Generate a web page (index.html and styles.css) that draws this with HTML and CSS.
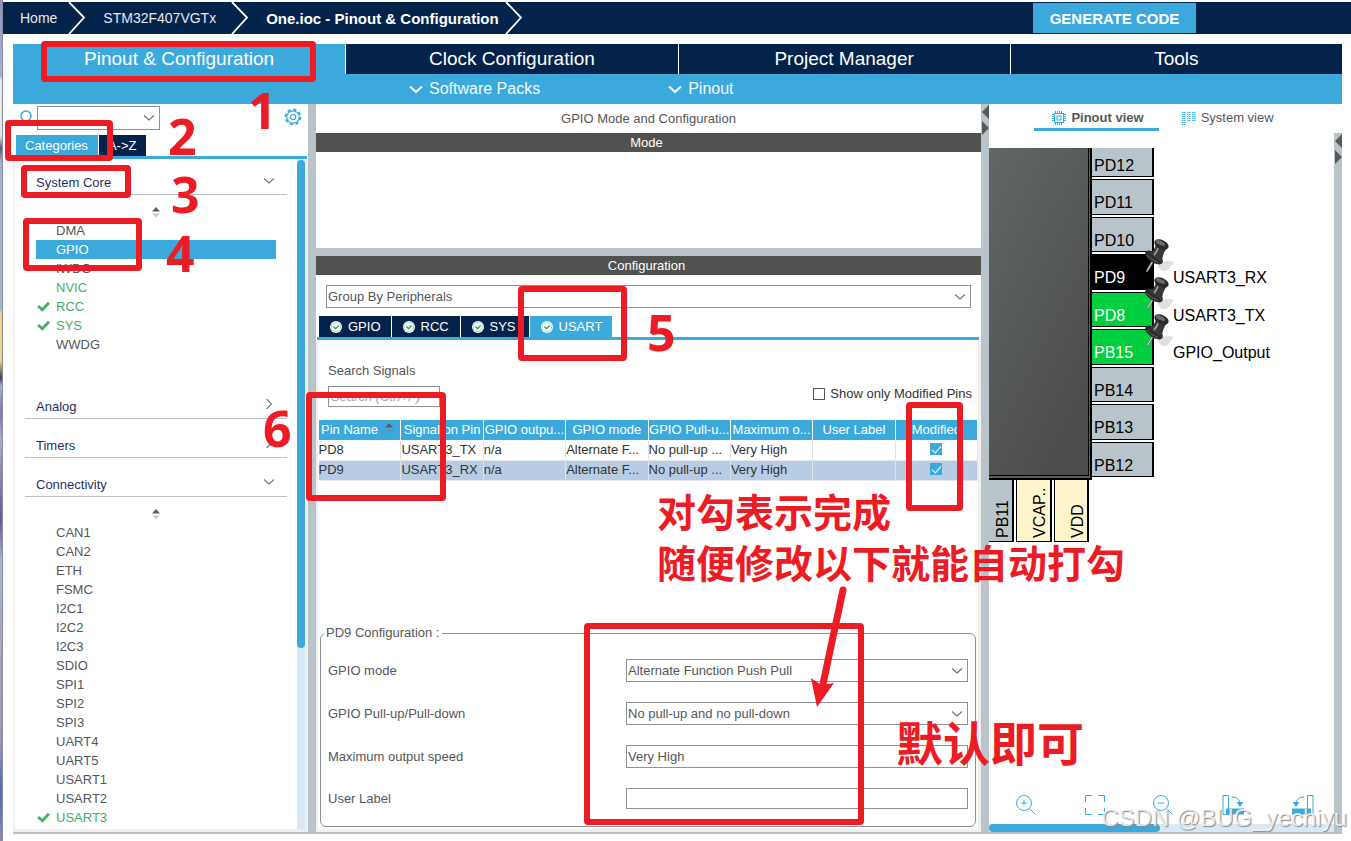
FILE: index.html
```html
<!DOCTYPE html>
<html lang="en">
<head>
    <meta charset="UTF-8">
    <meta name="viewport" content="width=device-width, initial-scale=1.0">
    <title>One.ioc - Pinout &amp; Configuration</title>
    <link rel="stylesheet" href="styles.css">
</head>
<body>
    <!-- Shared icons -->
    <svg class="sprite" aria-hidden="true">
        <symbol id="crumb-arrow" viewBox="0 0 18 32"><path d="M1 0 L16 15.500 L1 32" fill="none" stroke="#fff" stroke-width="1.800"/></symbol>
        <symbol id="chev-down" viewBox="0 0 12 8"><path d="M1 1.500 L6 6 L11 1.500" fill="none" stroke="currentColor" stroke-width="1.100"/></symbol>
        <symbol id="chev-right" viewBox="0 0 8 12"><path d="M1.500 1 L6.500 6 L1.500 11" fill="none" stroke="currentColor" stroke-width="1.100"/></symbol>
        <symbol id="chev-bold" viewBox="0 0 14 9"><path d="M1 1.500 L7 7 L13 1.500" fill="none" stroke="currentColor" stroke-width="2.200"/></symbol>
        <symbol id="sort" viewBox="0 0 8 11"><path d="M0 4.500 L4 0 L8 4.500 Z" fill="#5b5d5d"/><path d="M0 6.500 L4 10.500 L8 6.500 Z" fill="currentColor"/></symbol>
        <symbol id="tick" viewBox="0 0 12 10"><path d="M1 4.500 L5 8 L11 1.500" fill="none" stroke="#45ad6c" stroke-width="2.600"/></symbol>
        <symbol id="tick-round" viewBox="0 0 12 12"><circle cx="6" cy="6" r="6" fill="#fff"/><circle cx="6" cy="6" r="4.700" fill="none" stroke="#a5dab8" stroke-width="1"/><path d="M3.500 5.500 L5.500 7.700 L8.700 4.500" fill="none" stroke="#3aa45f" stroke-width="1.400"/></symbol>
        <symbol id="pushpin" viewBox="0 0 30 36">
            <path d="M12 27 Q20 20 29 23 L26 27 Q21 35 16 31 Z" fill="#000" opacity="0.120"/>
            <path d="M2 32 L8 22" stroke="#777" stroke-width="2.400" stroke-linecap="round"/>
            <path d="M2.500 31 L8 22" stroke="#ddd" stroke-width="1"/>
            <ellipse cx="9" cy="18.500" rx="10" ry="5" transform="rotate(33 9 18.500)" fill="#2b2b2b"/>
            <path d="M4 14 Q10 12 11 5 L22 9 Q17 15 17 24 Z" fill="#383838"/>
            <ellipse cx="16.500" cy="5.500" rx="7.500" ry="4.500" transform="rotate(25 16.500 5.500)" fill="#2b2b2b"/>
            <ellipse cx="15.500" cy="4" rx="5" ry="2" transform="rotate(25 15.500 4)" fill="#6a6a6a"/>
            <path d="M13 9 Q12 13 9 16" fill="none" stroke="#9a9a9a" stroke-width="1.800"/>
            <path d="M2 16 Q6 21 13 23.500" fill="none" stroke="#666" stroke-width="1"/>
        </symbol>
    </svg>

    <div class="desktop"></div>

    <div class="app">
        <header class="topbar">
            <nav class="crumbs">
                <a href="#" class="crumb">Home</a>
                <svg class="crumb-arrow"><use href="#crumb-arrow"/></svg>
                <a href="#" class="crumb crumb-chip">STM32F407VGTx</a>
                <svg class="crumb-arrow"><use href="#crumb-arrow"/></svg>
                <a href="#" class="crumb crumb-current">One.ioc - Pinout &amp; Configuration</a>
                <svg class="crumb-arrow"><use href="#crumb-arrow"/></svg>
            </nav>
            <button class="generate">GENERATE CODE</button>
        </header>

        <div class="workspace">
            <nav class="main-tabs">
                <button class="main-tab active">Pinout &amp; Configuration</button>
                <button class="main-tab">Clock Configuration</button>
                <button class="main-tab">Project Manager</button>
                <button class="main-tab">Tools</button>
            </nav>
            <div class="sub-bar">
                <button class="sub-item"><svg class="sub-icon"><use href="#chev-bold"/></svg>Software Packs</button>
                <button class="sub-item"><svg class="sub-icon"><use href="#chev-bold"/></svg>Pinout</button>
            </div>

            <main class="panes">
                <!-- Left: component list -->
                <aside class="side">
                    <div class="side-search">
                        <svg class="search-icon" viewBox="0 0 14 16"><circle cx="6" cy="6" r="5" fill="none" stroke="#3ba9dc" stroke-width="1.600"/><path d="M2.500 10 L0 14" stroke="#3ba9dc" stroke-width="1.600"/></svg>
                        <span class="combo">
                            <select aria-label="Search component"><option></option></select>
                            <svg class="combo-arrow"><use href="#chev-down"/></svg>
                        </span>
                        <button class="gear" aria-label="Settings">
                            <svg viewBox="0 0 18 18" fill="none" stroke="#3ba9dc">
                                <circle cx="9" cy="9" r="7.500" stroke-width="1.800" stroke-dasharray="3.200 2.690"/>
                                <circle cx="9" cy="9" r="6.200" stroke-width="1.200"/>
                                <circle cx="9" cy="9" r="2.700" stroke-width="1.200"/>
                            </svg>
                        </button>
                    </div>
                    <div class="tabs side-tabs">
                        <button class="tab active">Categories</button>
                        <button class="tab">A-&gt;Z</button>
                    </div>
                    <div class="side-body">
                        <div class="tree">
                            <button class="group">System Core <svg class="chev-down"><use href="#chev-down"/></svg></button>
                            <div class="sorter"><svg><use href="#sort"/></svg></div>
                            <ul class="items items-core">
                                <li>DMA</li>
                                <li class="selected">GPIO</li>
                                <li>IWDG</li>
                                <li class="on">NVIC</li>
                                <li class="on"><svg><use href="#tick"/></svg>RCC</li>
                                <li class="on"><svg><use href="#tick"/></svg>SYS</li>
                                <li>WWDG</li>
                            </ul>
                            <button class="group">Analog <svg class="chev-right"><use href="#chev-right"/></svg></button>
                            <button class="group">Timers <svg class="chev-right"><use href="#chev-right"/></svg></button>
                            <button class="group">Connectivity <svg class="chev-down"><use href="#chev-down"/></svg></button>
                            <div class="sorter"><svg><use href="#sort"/></svg></div>
                            <ul class="items">
                                <li>CAN1</li>
                                <li>CAN2</li>
                                <li>ETH</li>
                                <li>FSMC</li>
                                <li>I2C1</li>
                                <li>I2C2</li>
                                <li>I2C3</li>
                                <li>SDIO</li>
                                <li>SPI1</li>
                                <li>SPI2</li>
                                <li>SPI3</li>
                                <li>UART4</li>
                                <li>UART5</li>
                                <li>USART1</li>
                                <li>USART2</li>
                                <li class="on"><svg><use href="#tick"/></svg>USART3</li>
                            </ul>
                        </div>
                        <div class="scroll-y"><div class="thumb-y"></div></div>
                    </div>
                </aside>

                <div class="splitter"></div>

                <!-- Centre: mode and configuration -->
                <section class="center">
                    <h1 class="center-title">GPIO Mode and Configuration</h1>
                    <h2 class="bar">Mode</h2>
                    <div class="mode-area"></div>
                    <h2 class="bar">Configuration</h2>
                    <div class="group-by">
                        <span class="combo">
                            <select aria-label="Group by"><option>Group By Peripherals</option></select>
                            <svg class="combo-arrow"><use href="#chev-down"/></svg>
                        </span>
                    </div>
                    <div class="tabs config-tabs">
                        <button class="tab"><svg><use href="#tick-round"/></svg>GPIO</button>
                        <button class="tab"><svg><use href="#tick-round"/></svg>RCC</button>
                        <button class="tab"><svg><use href="#tick-round"/></svg>SYS</button>
                        <button class="tab active"><svg><use href="#tick-round"/></svg>USART</button>
                    </div>
                    <div class="config">
                        <label class="search-label" for="signal-search">Search Signals</label>
                        <div class="search-row">
                            <input type="text" id="signal-search" placeholder="Search (Ctrl+F)">
                            <label class="only-modified"><input type="checkbox"> Show only Modified Pins</label>
                        </div>
                        <table class="pins">
                            <thead>
                                <tr>
                                    <th class="sorted">Pin Name <svg class="th-sort"><use href="#sort"/></svg></th>
                                    <th>Signal on Pin</th>
                                    <th>GPIO outpu...</th>
                                    <th>GPIO mode</th>
                                    <th>GPIO Pull-u...</th>
                                    <th>Maximum o...</th>
                                    <th>User Label</th>
                                    <th>Modified</th>
                                </tr>
                            </thead>
                            <tbody>
                                <tr>
                                    <td>PD8</td>
                                    <td>USART3_TX</td>
                                    <td>n/a</td>
                                    <td>Alternate F...</td>
                                    <td>No pull-up ...</td>
                                    <td>Very High</td>
                                    <td></td>
                                    <td class="mod"><input type="checkbox" aria-label="PD8 modified" checked></td>
                                </tr>
                                <tr class="current">
                                    <td>PD9</td>
                                    <td>USART3_RX</td>
                                    <td>n/a</td>
                                    <td>Alternate F...</td>
                                    <td>No pull-up ...</td>
                                    <td>Very High</td>
                                    <td></td>
                                    <td class="mod"><input type="checkbox" aria-label="PD9 modified" checked></td>
                                </tr>
                            </tbody>
                        </table>
                        <fieldset class="pin-config">
                            <legend>PD9 Configuration :</legend>
                            <div class="fields">
                                <label for="mode">GPIO mode</label>
                                <span class="combo">
                                    <select id="mode"><option>Alternate Function Push Pull</option></select>
                                    <svg class="combo-arrow"><use href="#chev-down"/></svg>
                                </span>
                                <label for="pull">GPIO Pull-up/Pull-down</label>
                                <span class="combo">
                                    <select id="pull"><option>No pull-up and no pull-down</option></select>
                                    <svg class="combo-arrow"><use href="#chev-down"/></svg>
                                </span>
                                <label for="speed">Maximum output speed</label>
                                <span class="combo">
                                    <select id="speed"><option>Very High</option></select>
                                    <svg class="combo-arrow"><use href="#chev-down"/></svg>
                                </span>
                                <label for="user-label">User Label</label>
                                <input type="text" id="user-label">
                            </div>
                        </fieldset>
                    </div>
                </section>

                <div class="splitter">
                    <svg viewBox="0 0 8 32"><path d="M8 1 V15 L1 8 Z M1 17 V31 L8 24 Z" fill="#58595b"/></svg>
                </div>

                <!-- Right: chip view -->
                <section class="view">
                    <div class="view-tabs">
                        <button class="view-tab active">
                            <svg viewBox="0 0 14 14" fill="none" stroke="#3ba9dc"><rect x="2.500" y="2.500" width="9" height="9"/><rect x="5" y="5" width="4" height="4"/><path d="M3.500 0 V2 M5.500 0 V2 M7.500 0 V2 M9.500 0 V2 M3.500 12 V14 M5.500 12 V14 M7.500 12 V14 M9.500 12 V14 M0 3.500 H2 M0 5.500 H2 M0 7.500 H2 M0 9.500 H2 M12 3.500 H14 M12 5.500 H14 M12 7.500 H14 M12 9.500 H14"/></svg>
                            Pinout view
                        </button>
                        <button class="view-tab">
                            <svg viewBox="0 0 14 14" fill="none" stroke="#3ba9dc" stroke-dasharray="1.500 0.500"><path d="M0 1.500 H4 M0 3.500 H4 M0 5.500 H4 M0 7.500 H4 M0 9.500 H4 M0 11.500 H4 M0 13.500 H4 M5 1.500 H9 M5 3.500 H9 M5 5.500 H9 M5 7.500 H9 M5 9.500 H9 M10 1.500 H14 M10 3.500 H14 M10 5.500 H14 M10 7.500 H14 M10 9.500 H14"/></svg>
                            System view
                        </button>
                    </div>
                    <div class="view-body">
                        <div class="canvas">
                            <svg class="chip" width="345" height="396" viewBox="0 0 345 396">
                                <defs>
                                    <linearGradient id="body-fill" x1="0" y1="0" x2="0.600" y2="1">
                                        <stop offset="0" stop-color="#626666"/>
                                        <stop offset="1" stop-color="#4c4e4d"/>
                                    </linearGradient>
                                </defs>
                                <rect x="0" y="0" width="103" height="332" fill="#000"/>
                                <rect x="0" y="0" width="101" height="330" fill="#5b5e5e"/>
                                <rect x="0" y="0" width="100" height="328" fill="#000"/>
                                <rect x="0" y="0" width="99" height="327" fill="url(#body-fill)"/>
                                <!-- right side pins -->
                                <g fill="#000">
                                    <rect x="103" y="0" width="62" height="29"/>
                                    <rect x="103" y="31" width="62" height="36"/>
                                    <rect x="103" y="69" width="62" height="35"/>
                                    <rect x="103" y="106" width="62" height="36"/>
                                    <rect x="103" y="144" width="62" height="35"/>
                                    <rect x="103" y="181" width="62" height="36"/>
                                    <rect x="103" y="219" width="62" height="35"/>
                                    <rect x="103" y="256" width="62" height="36"/>
                                    <rect x="103" y="294" width="62" height="35"/>
                                </g>
                                <g fill="#b9c4ca">
                                    <rect x="103" y="0" width="60" height="28"/>
                                    <rect x="103" y="32" width="60" height="34"/>
                                    <rect x="103" y="70" width="60" height="33"/>
                                    <rect x="103" y="220" width="60" height="33"/>
                                    <rect x="103" y="257" width="60" height="34"/>
                                    <rect x="103" y="295" width="60" height="33"/>
                                </g>
                                <g fill="#00d03f">
                                    <rect x="103" y="145" width="60" height="33"/>
                                    <rect x="103" y="182" width="60" height="34"/>
                                </g>
                                <!-- bottom pins -->
                                <g fill="#000">
                                    <rect x="0" y="332" width="25" height="62"/>
                                    <rect x="27" y="332" width="36" height="62"/>
                                    <rect x="65" y="332" width="35" height="62"/>
                                </g>
                                <rect x="0" y="332" width="23" height="61" fill="#b9c4ca"/>
                                <rect x="28" y="332" width="33" height="61" fill="#fff5cd"/>
                                <rect x="66" y="332" width="32" height="61" fill="#fff5cd"/>
                                <g class="pin-text">
                                    <text x="105" y="23">PD12</text>
                                    <text x="105" y="60">PD11</text>
                                    <text x="105" y="98">PD10</text>
                                    <text x="105" y="135" class="light">PD9</text>
                                    <text x="105" y="173" class="light">PD8</text>
                                    <text x="105" y="210" class="light">PB15</text>
                                    <text x="105" y="248">PB14</text>
                                    <text x="105" y="285">PB13</text>
                                    <text x="105" y="323">PB12</text>
                                    <text x="184" y="135">USART3_RX</text>
                                    <text x="184" y="173">USART3_TX</text>
                                    <text x="184" y="210">GPIO_Output</text>
                                    <text transform="translate(19 390) rotate(-90)">PB11</text>
                                    <text transform="translate(56 390) rotate(-90)">VCAP..</text>
                                    <text transform="translate(94 390) rotate(-90)">VDD</text>
                                </g>
                                <use href="#pushpin" x="156" y="91" width="30" height="36"/>
                                <use href="#pushpin" x="156" y="129" width="30" height="36"/>
                                <use href="#pushpin" x="156" y="166" width="30" height="36"/>
                            </svg>
                            <div class="tools">
                                <button aria-label="Zoom in"><svg viewBox="0 0 20 20"><circle cx="8" cy="8" r="7.500"/><path d="M13.500 13.500 L19.500 19.500 M5 8 H11 M8 5 V11"/></svg></button>
                                <button aria-label="Best fit"><svg viewBox="0 0 20 20"><path d="M0.500 7 V0.500 H7 M13 0.500 H19.500 V7 M19.500 13 V19.500 H13 M7 19.500 H0.500 V13"/></svg></button>
                                <button aria-label="Zoom out"><svg viewBox="0 0 20 20"><circle cx="8" cy="8" r="7.500"/><path d="M13.500 13.500 L19.500 19.500 M5 8 H11"/></svg></button>
                                <button aria-label="Rotate right"><svg class="wide" viewBox="0 0 22 20"><path d="M1 0.500 H6.500 V19.500 H1 Z M10 2 Q17 2 18 8"/><path class="solid" d="M4 13.500 H22 V19.500 H4 Z M14.500 7 H21.500 L18 12 Z"/></svg></button>
                                <button aria-label="Rotate left"><svg class="wide" viewBox="0 0 22 20"><path d="M15.500 0.500 H21 V19.500 H15.500 Z M12 2 Q5 2 4 8"/><path class="solid" d="M0 13.500 H19 V19.500 H0 Z M0.500 7 H7.500 L4 12 Z"/></svg></button>
                            </div>
                            <div class="scroll-x"><div class="thumb-x"></div></div>
                        </div>
                        <div class="splitter">
                            <svg viewBox="0 0 8 32"><path d="M8 1 V15 L1 8 Z M1 17 V31 L8 24 Z" fill="#58595b"/></svg>
                        </div>
                    </div>
                </section>
            </main>
        </div>
    </div>

    <!-- Red notes drawn over the window -->
    <svg class="notes" width="1351" height="841" viewBox="0 0 1351 841">
        <g class="frames">
            <rect x="44" y="44" width="269" height="35" rx="1"/>
            <rect x="8" y="123" width="102" height="35" rx="1"/>
            <rect x="24" y="168" width="104" height="27" rx="1"/>
            <rect x="26" y="221" width="113" height="47" rx="1"/>
            <rect x="521" y="289" width="103" height="69" rx="1"/>
            <rect x="309" y="395" width="134" height="103" rx="1"/>
            <rect x="909" y="405" width="51" height="103" rx="1"/>
            <rect x="587" y="626" width="274" height="196" rx="1"/>
        </g>
        <path d="M843 590 L823 684" stroke="#ed1c24" stroke-width="7" stroke-linecap="round"/>
        <path d="M811 678 L821 685 L834 683 L817 707 Z" fill="#ed1c24"/>
        <g class="numbers">
            <text x="248" y="129">1</text>
            <text x="168" y="155">2</text>
            <text x="171" y="213">3</text>
            <text x="166" y="272">4</text>
            <text x="647" y="351">5</text>
            <text x="263" y="447">6</text>
        </g>
        <g class="remarks">
            <text x="657" y="527">对勾表示完成</text>
            <text x="657" y="578">随便修改以下就能自动打勾</text>
            <text x="896" y="761" class="big">默认即可</text>
        </g>
    </svg>
    <div class="watermark">CSDN @BUG_yechiyu</div>
</body>
</html>
```
FILE: styles.css
```css
* {
    margin: 0;
    padding: 0;
    box-sizing: border-box;
}

body {
    position: relative;
    display: flex;
    min-height: 100vh;
    background: #fff;
    color: #55575a;
    font-family: "Liberation Sans", Arial, sans-serif;
    font-size: 13px;
    overflow: hidden;
}

button,
input,
select {
    font: inherit;
    color: inherit;
    background: none;
    border: none;
    border-radius: 0;
}

a {
    color: inherit;
    text-decoration: none;
}

ul {
    list-style: none;
}

.sprite {
    position: absolute;
    width: 0;
    height: 0;
}

/* strip of the desktop left of the window */
.desktop {
    width: 3px;
    background: linear-gradient(#8f93c4, #a9aed0 76px, #e8e8ea 80px, #e8e8ea 136px, #5a5a6a 148px, #a5aed0 162px, #a8b0cc 308px, #f0d080 314px, #f0d88a 360px, #3a4050 378px, #a5b0cc 386px, #7f78b8 412px, #a5aac8 440px, #6058a0 520px, #a8b4cc 560px, #9c94b8 740px, #5468b8 790px, #8c88b0);
    border-right: 1px solid #8a8ca0;
}

.app {
    flex: 1;
    min-width: 0;
    display: flex;
    flex-direction: column;
    padding: 2px 0 7px;
}

/* Top bar */
.topbar {
    display: flex;
    align-items: center;
    justify-content: space-between;
    height: 32px;
    background: #03234b;
    color: #fff;
}

.crumbs {
    display: flex;
    align-items: center;
    font-size: 14px;
}

.crumb {
    padding: 0 11px 0 17px;
    color: #e6e9ee;
}

.crumb-chip {
    padding-right: 15px;
}

.crumb-current {
    font-size: 15px;
    font-weight: bold;
    color: #fff;
    padding-right: 6px;
}

.crumb-arrow {
    width: 18px;
    height: 32px;
}

.generate {
    width: 163px;
    height: 30px;
    margin-right: 155px;
    background: #3ba9dc;
    color: #fff;
    font-size: 15px;
    font-weight: bold;
}

/* Main tabs */
.workspace {
    flex: 1;
    display: flex;
    flex-direction: column;
    margin: 10px 9px 0 10px;
}

.main-tabs {
    display: grid;
    grid-template-columns: repeat(4, 1fr);
    height: 30px;
}

.main-tab {
    background: #03234b;
    color: #fff;
    font-size: 19px;
    border-left: 1px solid #fff;
}

.main-tab.active {
    background: #3ba9dc;
    border-left: none;
}

.sub-bar {
    display: flex;
    gap: 128px;
    height: 30px;
    padding-left: 396px;
    background: #3ba9dc;
}

.sub-item {
    display: flex;
    align-items: center;
    gap: 6px;
    color: #f0f8fc;
    font-size: 16px;
}

.sub-icon {
    width: 14px;
    height: 9px;
}

/* Panes */
.panes {
    flex: 1;
    display: grid;
    grid-template-columns: 295px 8px minmax(0, 665fr) 8px minmax(0, 353fr);
    border-bottom: 2px solid #b9c4ca;
}

.splitter {
    width: 8px;
    background: #b9c4ca;
}

.splitter svg {
    display: block;
    width: 8px;
    height: 32px;
}

.tabs {
    display: flex;
    gap: 1px;
    border-bottom: 3px solid #3ba9dc;
}

.tab {
    display: flex;
    align-items: center;
    height: 21px;
    background: #03234b;
    color: #fff;
}

.tab.active {
    background: #3ba9dc;
}

.combo {
    display: grid;
    align-items: center;
    height: 23px;
}

.combo select {
    grid-area: 1 / 1;
    width: 100%;
    height: 100%;
    padding-left: 1px;
    border: 1px solid #8c9499;
    appearance: none;
}

.combo-arrow {
    grid-area: 1 / 1;
    justify-self: end;
    width: 12px;
    height: 8px;
    margin-right: 5px;
    color: #6f7275;
    pointer-events: none;
}

/* Left pane */
.side {
    display: flex;
    flex-direction: column;
}

.side-search {
    display: flex;
    height: 31px;
    padding: 2px 6px 0 7px;
}

.side-search .combo {
    width: 123px;
    height: 24px;
}

.search-icon {
    width: 14px;
    height: 16px;
    margin: 4px 3px 0 0;
}

.gear {
    width: 18px;
    height: 18px;
    margin: 2px 0 0 auto;
}

.gear svg {
    display: block;
    width: 18px;
    height: 18px;
}

.side-tabs {
    padding-left: 3px;
    margin-right: 1px;
}

.side-tabs .tab {
    padding: 0 10px 0 9px;
}

.side-body {
    flex: 1;
    display: flex;
    border: solid #f0f0f0;
    border-width: 0 3px 3px 2px;
}

.tree {
    flex: 1;
    padding: 0 10px;
}

.group {
    display: flex;
    align-items: center;
    justify-content: space-between;
    width: 100%;
    height: 39px;
    padding: 14px 12px 0 11px;
    border-bottom: 1px solid #b9c4ca;
    color: #1f2f63;
    text-align: left;
}

.group:first-child {
    height: 36px;
    padding-top: 12px;
}

.group svg {
    margin-bottom: 4px;
    color: #77797c;
}

.chev-down {
    width: 12px;
    height: 8px;
}

.chev-right {
    width: 8px;
    height: 12px;
    margin-right: 2px;
}

.sorter {
    display: flex;
    justify-content: center;
    height: 26px;
    padding-top: 12px;
    color: #c9cbcc;
}

.sorter svg {
    width: 8px;
    height: 11px;
}

.items li {
    position: relative;
    height: 19px;
    line-height: 19px;
    margin: 0 11px;
    padding-left: 20px;
}

.items-core {
    margin-bottom: 26px;
}

.items .selected {
    background: #3ba9dc;
    color: #fff;
}

.items .on {
    color: #45ad6c;
}

.items svg {
    position: absolute;
    left: 1px;
    top: 4px;
    width: 13px;
    height: 11px;
}

.scroll-y {
    width: 8px;
    padding-top: 1px;
    background: #d9e8f5;
}

.thumb-y {
    height: 73%;
    border-radius: 4px;
    background: #3ba9dc;
}

/* Centre pane */
.center {
    display: flex;
    flex-direction: column;
}

.center-title {
    height: 29px;
    line-height: 29px;
    font-size: 13px;
    font-weight: normal;
    text-align: center;
}

.bar {
    height: 19px;
    line-height: 19px;
    padding-right: 4px;
    background: #505250;
    color: #fff;
    font-size: 13px;
    font-weight: normal;
    text-align: center;
}

.mode-area {
    height: 104px;
    border-bottom: 8px solid #b9c4ca;
}

.group-by {
    padding: 10px 10px 8px;
}

.config-tabs {
    margin: 0 2px 0 1px;
    padding-left: 2px;
}

.config-tabs .tab {
    gap: 6px;
    min-width: 68px;
    padding: 0 10px 0 11px;
}

.config-tabs svg {
    width: 12px;
    height: 12px;
}

.config {
    flex: 1;
    display: flex;
    flex-direction: column;
    padding-bottom: 2px;
    border: solid #f0f0f0;
    border-width: 0 3px 3px 2px;
}

.search-label {
    height: 46px;
    padding: 23px 10px 0;
    line-height: 16px;
}

.search-row {
    display: flex;
    justify-content: space-between;
    padding: 0 6px 13px 10px;
}

.search-row input[type="text"] {
    width: 112px;
    height: 21px;
    padding: 0 2px;
    border: 1px solid #8c9499;
}

.search-row ::placeholder {
    color: #a5a7a9;
    font-style: italic;
}

.only-modified {
    display: flex;
    align-items: center;
    gap: 5px;
    height: 15px;
    color: #333;
}

input[type="checkbox"] {
    display: block;
    width: 12px;
    height: 12px;
    border: 1px solid #55575a;
    appearance: none;
}

input[type="checkbox"]:checked {
    border: none;
    background: #3ba9dc;
}

input[type="checkbox"]:checked::after {
    content: "";
    display: block;
    width: 4px;
    height: 8px;
    margin: 1px 4px;
    border: solid #fff;
    border-width: 0 1px 1px 0;
    transform: rotate(40deg);
}

.pins {
    width: 100%;
    table-layout: fixed;
    border-collapse: collapse;
    color: #333;
}

.pins th,
.pins td {
    height: 20px;
    overflow: hidden;
    white-space: nowrap;
}

.pins th {
    border: solid #fff;
    border-width: 0 1px 1px;
    background: #3ba9dc;
    color: #fff;
    font-weight: normal;
}

.pins .sorted {
    padding-left: 2px;
    text-align: left;
}

.pins td {
    padding-bottom: 2px;
    border-right: 1px solid #e0e4e8;
    border-bottom: 1px solid #e8e8e8;
}

.pins .current td {
    background: #b8cde5;
}

.th-sort {
    width: 8px;
    height: 11px;
    margin-left: 3px;
    color: #5b93b2;
}

.mod input {
    margin: 0 auto;
}

.pin-config {
    margin: auto 2px 0;
    padding: 18px 7px 17px;
    border: 1px solid #8c9499;
    border-radius: 6px;
}

.pin-config legend {
    height: 16px;
    line-height: 16px;
    margin-left: -4px;
    padding: 0 3px 0 2px;
}

.fields {
    display: grid;
    grid-template-columns: 298px 1fr;
    align-items: center;
    row-gap: 20px;
}

.fields input {
    height: 21px;
    border: 1px solid #8c9499;
}

/* Right pane */
.view {
    display: flex;
    flex-direction: column;
}

.view-tabs {
    display: flex;
    justify-content: center;
    gap: 5px;
    height: 29px;
    padding-right: 8px;
}

.view-tab {
    display: flex;
    align-items: center;
    gap: 5px;
    height: 27px;
    padding: 3px 15px 0 18px;
    border-bottom: 3px solid transparent;
}

.view-tab svg {
    width: 14px;
    height: 14px;
}

.view-tab.active {
    border-color: #3ba9dc;
    font-weight: bold;
}

.view-body {
    flex: 1;
    display: flex;
}

.canvas {
    flex: 1;
    min-width: 0;
    display: flex;
    flex-direction: column;
    overflow: hidden;
}

.chip {
    margin-top: 15px;
}

.pin-text {
    font-size: 16px;
    fill: #000;
}

.pin-text .light {
    fill: #fff;
}

.tools {
    display: flex;
    justify-content: space-between;
    margin-top: auto;
    padding: 0 20px 9px 27px;
}

.tools svg {
    display: block;
    width: 20px;
    height: 20px;
    fill: none;
    stroke: #3ba9dc;
}

.tools .wide {
    width: 22px;
}

.tools .solid {
    fill: #3ba9dc;
    stroke: none;
}

.scroll-x {
    height: 8px;
    background: #d9e8f5;
}

.thumb-x {
    width: 171px;
    height: 8px;
    border-radius: 4px;
    background: #3ba9dc;
}

/* Notes over the window */
.notes {
    position: absolute;
    left: 0;
    top: 0;
    pointer-events: none;
}

.frames {
    fill: none;
    stroke: #ed1c24;
    stroke-width: 6;
}

.numbers,
.remarks {
    fill: #ed1c24;
    font-weight: bold;
}

.numbers {
    font-family: "Noto Sans", sans-serif;
    font-size: 50px;
}

.remarks {
    font-family: "Noto Sans CJK SC", sans-serif;
    font-size: 39px;
}

.remarks .big {
    font-size: 47px;
}

.watermark {
    position: absolute;
    right: 4px;
    bottom: 8px;
    color: rgba(255, 255, 255, 0.8);
    font-size: 24px;
    line-height: 30px;
    text-shadow: 1px 1px 1px #888;
    pointer-events: none;
}
```
